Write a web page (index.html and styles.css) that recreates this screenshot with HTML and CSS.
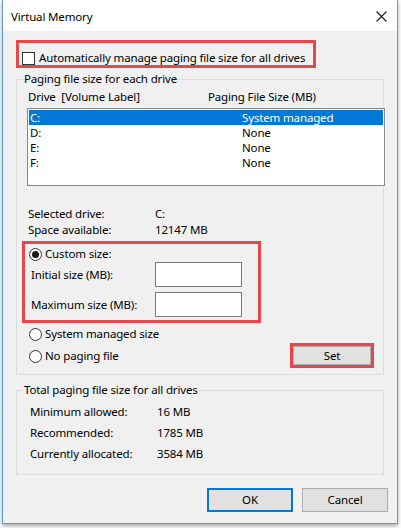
FILE: index.html
```html
<!DOCTYPE html>
<html>
<head>
<meta charset="utf-8">
<title>Virtual Memory</title>
<link rel="stylesheet" href="styles.css">
</head>
<body>
<div class="window">
  <div class="titlebar">
    <span class="title">Virtual Memory</span>
    <svg class="close" width="11" height="11" viewBox="0 0 11 11"><path d="M0.5 0.5 L10.5 10.5 M10.5 0.5 L0.5 10.5" stroke="#1a1a1a" stroke-width="1.1" fill="none"/></svg>
  </div>
  <div class="content">
    <div class="hl auto-box">
      <span class="checkbox"></span>
      <span class="auto-label">Automatically manage paging file size for all drives</span>
    </div>

    <fieldset class="group drives">
      <legend>Paging file size for each drive</legend>
      <div class="col-head">
        <span class="c1">Drive&nbsp; [Volume Label]</span>
        <span class="c2">Paging File Size (MB)</span>
      </div>
      <div class="listbox">
        <div class="row sel"><span class="c1">C:</span><span class="c2">System managed</span></div>
        <div class="row"><span class="c1">D:</span><span class="c2">None</span></div>
        <div class="row"><span class="c1">E:</span><span class="c2">None</span></div>
        <div class="row"><span class="c1">F:</span><span class="c2">None</span></div>
      </div>
      <div class="info">
        <span class="lbl">Selected drive:</span><span>C:</span>
        <span class="lbl">Space available:</span><span>12147 MB</span>
      </div>
      <div class="hl custom-box">
        <div class="radio-row"><span class="radio checked"></span><span>Custom size:</span></div>
        <div class="size-row"><span class="size-lbl">Initial size (MB):</span><span class="input"></span></div>
        <div class="size-row second"><span class="size-lbl">Maximum size (MB):</span><span class="input"></span></div>
      </div>
      <div class="bottom-row">
        <div class="radios">
          <div class="radio-row"><span class="radio"></span><span>System managed size</span></div>
          <div class="radio-row"><span class="radio"></span><span>No paging file</span></div>
        </div>
        <div class="hl set-box"><span class="btn set-btn">Set</span></div>
      </div>
    </fieldset>

    <fieldset class="group totals">
      <legend>Total paging file size for all drives</legend>
      <div class="total-grid">
        <span class="lbl">Minimum allowed:</span><span>16 MB</span>
        <span class="lbl">Recommended:</span><span>1785 MB</span>
        <span class="lbl">Currently allocated:</span><span>3584 MB</span>
      </div>
    </fieldset>

    <div class="buttons">
      <span class="btn dlg-btn default">OK</span>
      <span class="btn dlg-btn">Cancel</span>
    </div>
  </div>
</div>
</body>
</html>
```

FILE: styles.css
```css
* { box-sizing: border-box; }
html, body { margin: 0; padding: 0; background: #ffffff; }
body {
  font-family: "Noto Sans", "Open Sans", sans-serif;
  font-size: 11.5px;
  letter-spacing: -0.15px;
  line-height: 16px;
  color: #000;
  width: 401px;
  height: 528px;
  overflow: hidden;
  white-space: nowrap;
}
.window {
  margin-left: 2px;
  width: 396px;
  height: 524px;
  border: 1px solid #5f9bd6;
  border-top: 0;
  background: #f0f0f0;
  display: flex;
  flex-direction: column;
  box-shadow: 0 2px 4px rgba(0,0,0,0.35);
}
.titlebar {
  height: 31px;
  flex: none;
  background: #ffffff;
  display: flex;
  align-items: center;
  justify-content: space-between;
  padding: 0 10px 0 8px;
}
.title { padding-top: 2px; }
.close { display: block; margin-top: 2px; }
.content {
  flex: 1;
  padding: 9px 9px 0 13px;
  display: flex;
  flex-direction: column;
  align-items: flex-start;
}
.hl { border: 3px solid #e5474c; }
.auto-box {
  width: 300px;
  height: 28px;
  display: flex;
  align-items: flex-start;
  padding: 8px 0 0 3px;
}
.checkbox {
  width: 13px;
  height: 13px;
  border: 1px solid #333;
  background: #fff;
  flex: none;
  margin-right: 4px;
  margin-top: 1px;
}
.auto-label { line-height: 14px; }

.group {
  margin: 3px 0 0 0;
  width: 368px;
  border: 1px solid #dcdcdc;
  padding: 0 0 0 6px;
  min-width: 0;
}
.group legend {
  padding: 0 1px;
  line-height: 16px;
}
.col-head {
  display: flex;
  margin: 2px 0 0 5px;
}
.col-head .c1 { width: 180px; }
.listbox {
  margin: 3px 0 0 4px;
  width: 358px;
  height: 78px;
  background: #fff;
  border: 1px solid #828790;
  padding: 1px;
}
.row {
  display: flex;
  height: 15px;
  line-height: 15px;
  padding-left: 1px;
}
.row .c1 { width: 212px; }
.row.sel { background: #0078d7; color: #fff; }
.info {
  margin: 20px 0 0 5px;
  display: grid;
  grid-template-columns: 127px auto;
}
.custom-box {
  margin: 3px 0 0 -1px;
  width: 239px;
  height: 82px;
  padding: 2px 0 0 4px;
}
.radio-row {
  display: flex;
  align-items: center;
  height: 16px;
}
.radio {
  width: 13px;
  height: 13px;
  border: 1px solid #333;
  border-radius: 50%;
  background: #fff;
  flex: none;
  margin-right: 3px;
  display: flex;
  align-items: center;
  justify-content: center;
}
.radio.checked::after {
  content: "";
  width: 7px;
  height: 7px;
  border-radius: 50%;
  background: #1a1a1a;
}
.size-row {
  display: flex;
  align-items: center;
  height: 25px;
  padding-left: 2px;
}
.size-row.second { margin-top: 5px; }
.size-lbl { width: 124px; }
.input {
  width: 87px;
  height: 25px;
  background: #fff;
  border: 1px solid #7a7a7a;
}
.bottom-row {
  display: flex;
  justify-content: space-between;
  align-items: flex-start;
  height: 45px;
  margin-bottom: 6px;
}
.radios {
  margin: 3px 0 0 6px;
  display: flex;
  flex-direction: column;
  gap: 6px;
}
.set-box {
  margin: 20px 9px 0 0;
  width: 84px;
  height: 25px;
  display: flex;
}
.btn {
  display: flex;
  align-items: center;
  justify-content: center;
  background: #e1e1e1;
  border: 1px solid #adadad;
}
.set-btn { flex: 1; }

.totals { margin-top: 7px; }
.total-grid {
  margin: 3px 0 10px 7px;
  display: grid;
  grid-template-columns: 127px auto;
  grid-auto-rows: 21px;
  align-items: center;
}
.buttons {
  align-self: stretch;
  margin-top: 13px;
  display: flex;
  justify-content: flex-end;
  gap: 9px;
}
.dlg-btn {
  width: 86px;
  height: 24px;
}
.dlg-btn.default { border: 2px solid #0078d7; }
```
